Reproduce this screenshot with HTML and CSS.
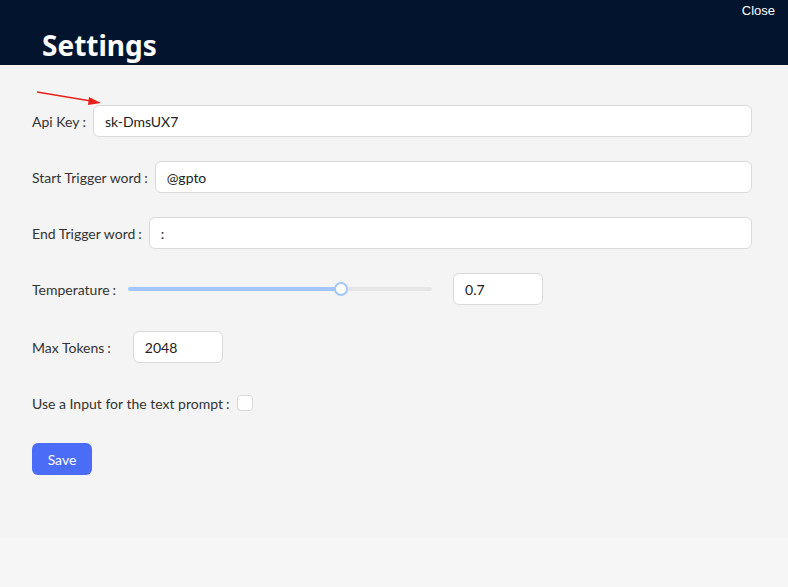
FILE: index.html
```html
<!DOCTYPE html>
<html lang="en">
<head>
    <meta charset="UTF-8">
    <meta name="viewport" content="width=device-width, initial-scale=1.0">
    <title>Settings</title>
    <link rel="stylesheet" href="styles.css">
</head>
<body>
    <header class="top-bar">
        <a class="close-link" href="#">Close</a>
        <h1>Settings</h1>
    </header>

    <main class="settings-panel">
        <form class="settings-form" onsubmit="event.preventDefault()">
            <div class="form-row">
                <!-- red arrow pointing at the key field -->
                <svg class="hint-arrow" width="70" height="20" viewBox="0 0 70 20">
                    <line x1="2" y1="3" x2="56" y2="12" stroke="#e8201c" stroke-width="1.6"/>
                    <polygon points="66,14 54,8 53,16" fill="#e8201c"/>
                </svg>
                <label for="api-key">Api Key</label>
                <input type="text" id="api-key" class="text-input wide" value="sk-DmsUX7">
            </div>
            <div class="form-row">
                <label for="start-word">Start Trigger word</label>
                <input type="text" id="start-word" class="text-input wide" value="@gpto">
            </div>
            <div class="form-row">
                <label for="end-word">End Trigger word</label>
                <input type="text" id="end-word" class="text-input wide" value=":">
            </div>
            <div class="form-row row-slider">
                <label for="temperature">Temperature</label>
                <div class="slider">
                    <div class="slider-fill" style="width: 70%"></div>
                    <div class="slider-handle" style="left: 70%"></div>
                </div>
                <input type="text" id="temperature" class="text-input small" value="0.7">
            </div>
            <div class="form-row">
                <label for="max-tokens" class="label-tokens">Max Tokens</label>
                <input type="text" id="max-tokens" class="text-input small" value="2048">
            </div>
            <div class="form-row">
                <label for="use-input">Use a Input for the text prompt</label>
                <span class="checkbox" id="use-input"></span>
            </div>
            <button type="submit" class="save-button">Save</button>
        </form>
    </main>
</body>
</html>
```

FILE: styles.css
```css
body {
    margin: 0;
    font-family: Lato, "Noto Sans", sans-serif;
    font-size: 14px;
    color: #333;
    background-color: #f6f6f6;
}
.top-bar {
    background-color: #03142e;
    height: 65px;
    position: relative;
}
.top-bar h1 {
    margin: 0;
    padding: 27px 0 0 42px;
    font-family: "Noto Sans", sans-serif;
    font-size: 28px;
    line-height: 36px;
    font-weight: bold;
    color: #fff;
}
.close-link {
    position: absolute;
    top: 3px;
    right: 13px;
    font-family: "Liberation Sans", Arial, sans-serif;
    font-size: 13px;
    color: #fff;
    text-decoration: none;
}
.settings-panel {
    background-color: #f4f4f4;
    height: 473px;
    padding: 40px 36px 0 32px;
    box-sizing: border-box;
}
.form-row {
    display: flex;
    align-items: center;
    height: 32px;
    margin-bottom: 24px;
    position: relative;
}
.row-slider {
    margin-bottom: 26px;
}
.form-row label {
    white-space: nowrap;
}
.form-row label::after {
    content: ":";
    margin: 0 7px 0 3px;
}
.label-tokens::after {
    margin-right: 22px !important;
}
.hint-arrow {
    position: absolute;
    left: 3px;
    top: -16px;
}
.text-input {
    height: 32px;
    box-sizing: border-box;
    padding: 0 11px;
    border: 1px solid #d9d9d9;
    border-radius: 6px;
    background-color: #fff;
    font-family: inherit;
    font-size: 14px;
    color: #222;
    outline: none;
}
.text-input.wide {
    flex: 1;
}
.text-input.small {
    width: 90px;
}
.slider {
    position: relative;
    width: 304px;
    height: 4px;
    margin: 0 21px 0 5px;
    border-radius: 2px;
    background-color: #e6e6e6;
}
.slider-fill {
    height: 4px;
    border-radius: 2px;
    background-color: #a3c7fd;
}
.slider-handle {
    position: absolute;
    top: -5px;
    width: 10px;
    height: 10px;
    margin-left: -7px;
    border: 2px solid #a3c7fd;
    border-radius: 50%;
    background-color: #fff;
}
.checkbox {
    display: inline-block;
    width: 16px;
    height: 16px;
    margin-left: 1px;
    box-sizing: border-box;
    border: 1px solid #d9d9d9;
    border-radius: 4px;
    background-color: #fff;
}
.save-button {
    background-color: #4a6cf7;
    color: #fff;
    border: none;
    border-radius: 6px;
    height: 32px;
    width: 60px;
    padding: 0;
    font-family: inherit;
    font-size: 14px;
    cursor: pointer;
}
```
